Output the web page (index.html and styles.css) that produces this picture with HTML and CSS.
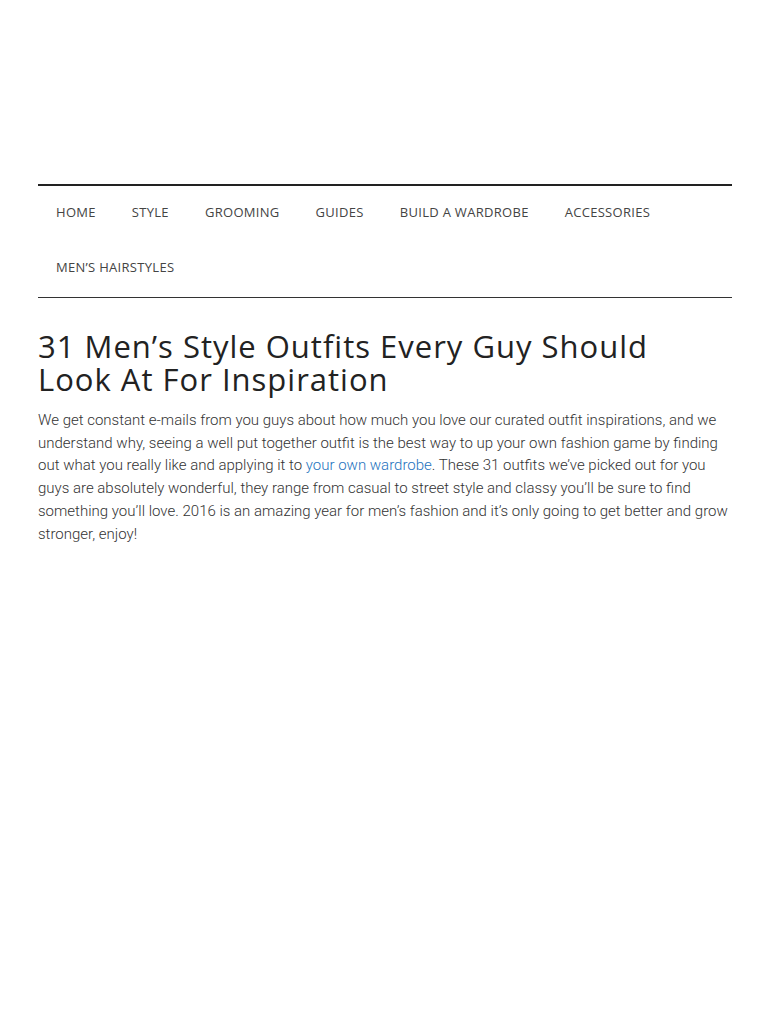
FILE: index.html
```html
<!DOCTYPE html>
<html lang="en">
<head>
    <meta charset="UTF-8">
    <meta name="viewport" content="width=device-width, initial-scale=1.0">
    <title>31 Men's Style Outfits Every Guy Should Look At For Inspiration</title>
    <link rel="stylesheet" href="styles.css">
</head>
<body>
    <!-- Header (logo area left blank) -->
    <header class="site-header"></header>

    <!-- Main Nav -->
    <nav class="main-nav">
        <ul>
            <li><a href="#">Home</a></li>
            <li><a href="#">Style</a></li>
            <li><a href="#">Grooming</a></li>
            <li><a href="#">Guides</a></li>
            <li><a href="#">Build a Wardrobe</a></li>
            <li><a href="#">Accessories</a></li>
            <li><a href="#">Men’s Hairstyles</a></li>
        </ul>
    </nav>

    <!-- Article -->
    <article class="entry">
        <h1 class="entry-title">31 Men’s Style Outfits Every Guy Should Look At For Inspiration</h1>
        <p>We get constant e-mails from you guys about how much you love our curated outfit inspirations, and we understand why, seeing a well put together outfit is the best way to up your own fashion game by finding out what you really like and applying it to <a href="#">your own wardrobe</a>. These 31 outfits we’ve picked out for you guys are absolutely wonderful, they range from casual to street style and classy you’ll be sure to find something you’ll love. 2016 is an amazing year for men’s fashion and it’s only going to get better and grow stronger, enjoy!</p>
    </article>
</body>
</html>
```

FILE: styles.css
```css
* {
    margin: 0;
    padding: 0;
    box-sizing: border-box;
}

body {
    font-family: Roboto, "Liberation Sans", sans-serif;
    background: #fff;
    color: #333;
    padding: 0 36px 0 38px;
}

/* Header */
.site-header {
    height: 184px;
}

/* Main Nav */
.main-nav {
    border-top: 2px solid #222;
    border-bottom: 1px solid #333;
}

.main-nav ul {
    list-style: none;
    display: flex;
    flex-wrap: wrap;
    padding-bottom: 1px;
}

.main-nav a {
    display: block;
    padding: 16px 18px 19px;
    font-family: "Open Sans", sans-serif;
    font-size: 13px;
    line-height: 20px;
    letter-spacing: 0.3px;
    color: #444;
    text-transform: uppercase;
    text-decoration: none;
}

/* Article */
.entry {
    padding-top: 32px;
}

.entry-title {
    max-width: 640px;
    font-family: "Open Sans", sans-serif;
    font-weight: 400;
    font-size: 31px;
    line-height: 33px;
    letter-spacing: 1px;
    color: #222;
    margin-bottom: 13px;
}

.entry p {
    font-size: 15px;
    font-weight: 300;
    line-height: 22.7px;
}

.entry p a {
    color: #1e73be;
    text-decoration: none;
}
```
